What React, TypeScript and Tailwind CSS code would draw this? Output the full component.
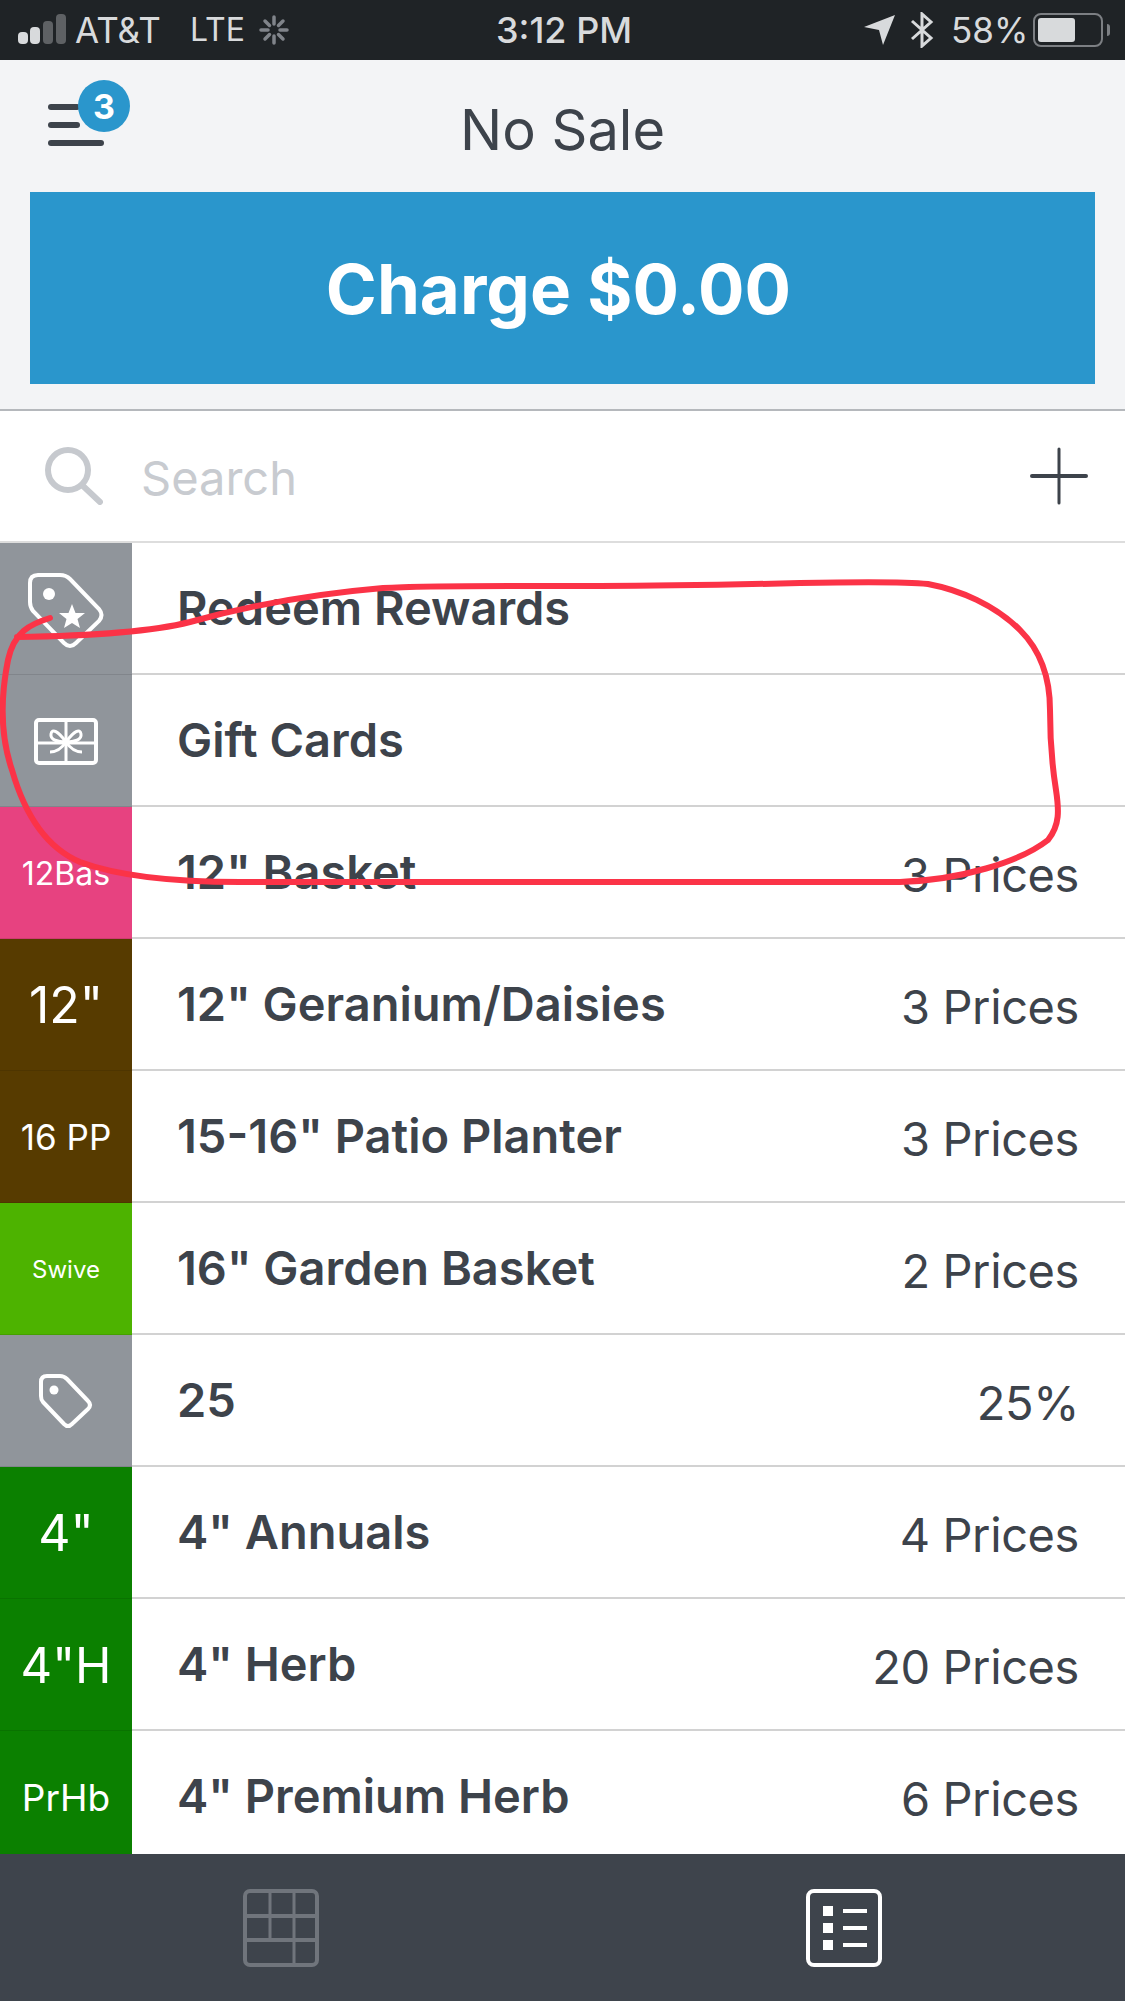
const rows = [
  { name: "Redeem Rewards", tile: "bg-[#90959b]", icon: "reward" },
  { name: "Gift Cards", tile: "bg-[#90959b]", icon: "gift" },
  { name: '12" Basket', price: "3 Prices", tile: "bg-[#e74280]", label: "12Bas", size: "text-[32px]" },
  { name: '12" Geranium/Daisies', price: "3 Prices", tile: "bg-[#573b00]", label: '12"', size: "text-[50px]" },
  { name: '15-16" Patio Planter', price: "3 Prices", tile: "bg-[#573b00]", label: "16 PP", size: "text-[35px]" },
  { name: '16" Garden Basket', price: "2 Prices", tile: "bg-[#4db300]", label: "Swive", size: "text-[24px]" },
  { name: "25", price: "25%", tile: "bg-[#90959b]", icon: "tag" },
  { name: '4" Annuals', price: "4 Prices", tile: "bg-[#0b8000]", label: '4"', size: "text-[50px]" },
  { name: '4" Herb', price: "20 Prices", tile: "bg-[#0b8000]", label: '4"H', size: "text-[49px]" },
  { name: '4" Premium Herb', price: "6 Prices", tile: "bg-[#0b8000]", label: "PrHb", size: "text-[37px]" },
];

const TileIcon = ({ icon }: { icon: string }) => {
  if (icon === "reward") {
    return (
      <svg width="132" height="132" viewBox="0 0 132 132" fill="none">
        <path
          d="M38 31H60Q66 31 70 35L99 65Q104 71 99 77L76 99Q70 105 64 99L33 67Q30 63 30 58V39Q30 31 38 31Z"
          stroke="#fff"
          strokeWidth="4"
        />
        <circle cx="49" cy="50" r="6" fill="#fff" />
        <path d="M72 60L75.5 69L85 69L77.5 75L80 84L72 79L64 84L66.5 75L59 69L68.5 69Z" fill="#fff" />
      </svg>
    );
  }
  if (icon === "gift") {
    return (
      <svg width="132" height="132" viewBox="0 0 132 132" fill="none" stroke="#fff">
        <rect x="36" y="44" width="60" height="43" rx="3" strokeWidth="4" />
        <path d="M36 67H96M66 44V87" strokeWidth="3" />
        <path
          d="M66 66C58 55 52 52 51 58C50 64 58 66 66 66C74 66 82 64 81 58C80 52 74 55 66 66ZM66 66C62 72 56 76 50 76M66 66C70 72 76 76 82 76"
          strokeWidth="3"
        />
      </svg>
    );
  }
  return (
    <svg width="132" height="132" viewBox="0 0 132 132" fill="none">
      <path
        d="M47 40H60Q64 40 67 43L88 65Q92 69 88 73L72 88Q68 92 64 88L43 66Q41 64 41 60V46Q41 40 47 40Z"
        stroke="#fff"
        strokeWidth="4"
      />
      <circle cx="54" cy="54" r="4.5" fill="#fff" />
    </svg>
  );
};

const StatusBar = () => (
  <div className="flex h-[60px] shrink-0 items-center bg-[#1f2326] pl-[18px] pr-[15px] text-[35px] text-[#d8dadc]">
    <div className="flex flex-1 items-center">
      <svg width="48" height="32" viewBox="0 0 48 32" fill="#d8dadc">
        <rect x="0" y="18" width="10" height="12" rx="4" />
        <rect x="12" y="13" width="10" height="17" rx="4" />
        <rect x="25" y="7" width="10" height="23" rx="4" fill="#5e6164" />
        <rect x="38" y="0" width="10" height="30" rx="4" fill="#5e6164" />
      </svg>
      <span className="ml-[9px] w-[115px]">AT&amp;T</span>
      <span className="w-[68px] text-[32px]">LTE</span>
      <svg width="32" height="32" viewBox="0 0 32 32" stroke="#80848a" strokeWidth="3.5" strokeLinecap="round">
        <path d="M16 3V10M16 22V29M3 16H10M22 16H29M7 7L11.5 11.5M20.5 20.5L25 25M25 7L20.5 11.5M11.5 20.5L7 25" />
      </svg>
    </div>
    <span className="text-[36px] font-medium">3:12 PM</span>
    <div className="flex flex-1 items-center justify-end">
      <svg width="31" height="30" viewBox="0 0 31 30" fill="#d8dadc">
        <path d="M31 0L19 30L15 15L0 12Z" />
      </svg>
      <svg className="ml-[15px]" width="24" height="36" viewBox="0 0 24 36" fill="none" stroke="#d8dadc" strokeWidth="3">
        <path d="M2 9L21 26L12 34V2L21 10L2 27" />
      </svg>
      <span className="ml-[17px] w-[82px]">58%</span>
      <div className="flex h-[34px] w-[70px] items-center rounded-[8px] border-2 border-[#7c7f83] pl-[3px]">
        <div className="h-[24px] w-[37px] rounded-[3px] bg-[#d8dadc]" />
      </div>
      <div className="ml-[4px] h-[12px] w-[3px] rounded-r bg-[#7c7f83]" />
    </div>
  </div>
);

const App = () => {
  return (
    <div className="relative flex h-[2001px] w-[1125px] flex-col overflow-hidden bg-white font-['Inter',sans-serif] text-[#3d434b]">
      <StatusBar />

      <div className="h-[351px] shrink-0 border-b-2 border-[#b5b8bc] bg-[#f3f4f6] px-[30px]">
        <div className="relative flex h-[132px] items-center justify-center pt-[8px]">
          <div className="absolute left-[18px] top-[44px] flex flex-col gap-[12px]">
            <div className="h-[6px] w-[32px] rounded-full bg-[#3d434b]" />
            <div className="h-[6px] w-[32px] rounded-full bg-[#3d434b]" />
            <div className="h-[6px] w-[56px] rounded-full bg-[#3d434b]" />
          </div>
          <div className="absolute left-[48px] top-[20px] flex h-[52px] w-[52px] items-center justify-center rounded-full bg-[#2a96cc] text-[34px] font-bold text-white">
            3
          </div>
          <h1 className="text-[56px] font-normal">No Sale</h1>
        </div>
        <button className="flex h-[192px] w-full items-center justify-center bg-[#2a96cc] pr-[8px] pt-[4px] text-[69px] font-bold text-white">
          Charge $0.00
        </button>
      </div>

      <div className="flex h-[132px] shrink-0 items-center border-b-2 border-[#ddd] pl-[45px] pr-[37px]">
        <svg width="58" height="58" viewBox="0 0 58 58" fill="none" stroke="#c6c9ce" strokeWidth="6" strokeLinecap="round">
          <circle cx="23" cy="23" r="20" />
          <path d="M37 38L55 55" />
        </svg>
        <span className="ml-[38px] flex-1 pt-[4px] text-[47px] text-[#c8cbd0]">Search</span>
        <svg width="58" height="58" viewBox="0 0 58 58" stroke="#3d434b" strokeLinecap="round">
          <path d="M29 2V56" strokeWidth="3" />
          <path d="M2 29H56" strokeWidth="4" />
        </svg>
      </div>

      <div className="flex-1 overflow-hidden">
        {rows.map((row) => (
          <div key={row.name} className="flex h-[132px] items-stretch">
            <div
              className={`flex w-[132px] shrink-0 items-center justify-center border-b border-black/10 pt-[2px] text-white ${row.tile} ${row.size ?? ""}`}
            >
              {row.icon ? <TileIcon icon={row.icon} /> : row.label}
            </div>
            <div className="flex flex-1 items-center justify-between border-b-2 border-[#d2d2d2] pl-[45px] pr-[46px]">
              <span className="text-[47px] font-semibold">{row.name}</span>
              {row.price && <span className="pt-[6px] text-[47px] tracking-[-0.4px]">{row.price}</span>}
            </div>
          </div>
        ))}
      </div>

      <div className="flex h-[147px] shrink-0 bg-[#3e444c]">
        <div className="flex flex-1 items-center justify-center">
          <svg width="76" height="78" viewBox="0 0 76 78" fill="none" stroke="#70757c" strokeWidth="4">
            <rect x="2" y="2" width="72" height="74" rx="5" />
            <path d="M2 27H74M2 51H74" strokeWidth="4" />
            <path d="M27 2V51M51 2V76" strokeWidth="3" />
          </svg>
        </div>
        <div className="flex flex-1 items-center justify-center">
          <svg width="76" height="78" viewBox="0 0 76 78" fill="none">
            <rect x="2" y="2" width="72" height="74" rx="6" stroke="#fff" strokeWidth="4" />
            <path d="M17 17H27V27H17ZM17 34H27V44H17ZM17 51H27V61H17Z" fill="#fff" />
            <path d="M37 22H61M37 39H61M37 56H61" stroke="#fff" strokeWidth="4" />
          </svg>
        </div>
      </div>

      {/* hand drawn annotation on top of the screenshot */}
      <svg className="pointer-events-none absolute inset-0" width="1125" height="2001" viewBox="0 0 1125 2001" fill="none">
        <path
          d="M50 618C30 624 14 632 8 660C0 700 0 735 12 770C22 805 40 845 80 862C115 875 170 882 240 882L900 882C960 880 1020 862 1048 840C1060 825 1059 810 1056 790C1052 765 1050 740 1050 710C1050 675 1040 650 1020 630C995 605 960 590 928 584C900 581 850 582 800 583C720 585 680 586 600 586C500 586 430 585 383 588C300 595 240 608 190 622C150 632 90 636 17 637"
          stroke="#fb3347"
          strokeWidth="6"
          strokeLinecap="round"
        />
      </svg>
    </div>
  );
};

export default App;
